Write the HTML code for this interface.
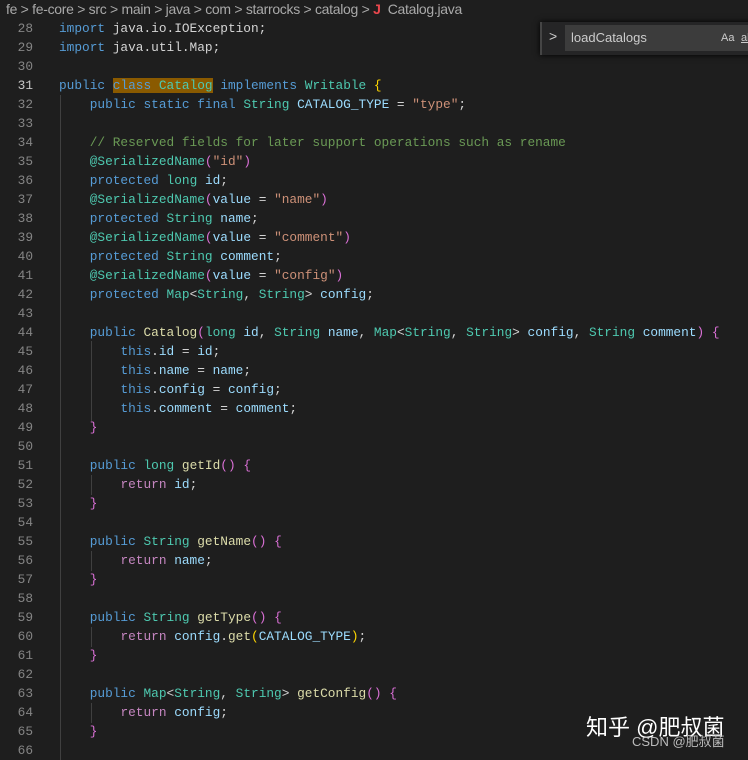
<!DOCTYPE html>
<html><head><meta charset="utf-8"><style>
body{margin:0;width:748px;height:758px;background:#1e1e1e;overflow:hidden;position:relative;font-family:"Liberation Mono",monospace}
.bc{position:absolute;left:6px;top:1px;font:14px "Liberation Sans",sans-serif;color:#a9a9a9;white-space:pre;letter-spacing:-0.3px}
.code{position:absolute;top:19px;left:0;font-size:12.8px;line-height:19px;color:#d4d4d4}
.l{height:19px;position:relative;white-space:pre}
.n{display:inline-block;width:33px;text-align:right;color:#858585;margin-right:26px}
.k{color:#569cd6}.t{color:#4ec9b0}.f{color:#dcdcaa}.s{color:#ce9178}.c{color:#6a9955}.v{color:#9cdcfe}.r{color:#c586c0}.b{color:#da70d6}.y{color:#ffd700}
.g{position:absolute;width:1px;background:#404040}
.find{position:absolute;left:540px;top:22px;width:220px;height:33px;background:#252526;box-shadow:0 0 6px #000;border-left:2px solid #454545}
.inp{position:absolute;left:23px;top:3px;width:200px;height:24px;background:#3c3c3c;border:1px solid #3c3c3c;font:13px "Liberation Sans",sans-serif;color:#ccc;line-height:24px;padding-left:5px}
.wm{position:absolute;color:#fff;font-family:"Liberation Sans","Noto Sans CJK SC",sans-serif;white-space:nowrap}
</style></head><body>
<div class="bc">fe &gt; fe-core &gt; src &gt; main &gt; java &gt; com &gt; starrocks &gt; catalog &gt; <span style="color:#e8474d;font-weight:bold">J</span>  Catalog.java</div>
<div class="g" style="left:60px;top:95px;height:665px"></div>
<div class="g" style="left:91px;top:341px;height:80px"></div>
<div class="g" style="left:91px;top:475px;height:20px"></div>
<div class="g" style="left:91px;top:551px;height:20px"></div>
<div class="g" style="left:91px;top:627px;height:20px"></div>
<div class="g" style="left:91px;top:703px;height:20px"></div>
<div class="code"><div class="l"><span class="n">28</span><span class="k">import</span> java.io.IOException;</div><div class="l"><span class="n">29</span><span class="k">import</span> java.util.Map;</div><div class="l"><span class="n">30</span></div><div class="l"><span class="n" style="color:#c6c6c6">31</span><span class="k">public</span> <span style="background:#8a5a00"><span class="k">class</span> <span class="t">Catalog</span></span> <span class="k">implements</span> <span class="t">Writable</span> <span class="y">{</span></div><div class="l"><span class="n">32</span>    <span class="k">public static final</span> <span class="t">String</span> <span class="v">CATALOG_TYPE</span> = <span class="s">"type"</span>;</div><div class="l"><span class="n">33</span></div><div class="l"><span class="n">34</span>    <span class="c">// Reserved fields for later support operations such as rename</span></div><div class="l"><span class="n">35</span>    <span class="t">@SerializedName</span><span class="b">(</span><span class="s">"id"</span><span class="b">)</span></div><div class="l"><span class="n">36</span>    <span class="k">protected</span> <span class="t">long</span> <span class="v">id</span>;</div><div class="l"><span class="n">37</span>    <span class="t">@SerializedName</span><span class="b">(</span><span class="v">value</span> = <span class="s">"name"</span><span class="b">)</span></div><div class="l"><span class="n">38</span>    <span class="k">protected</span> <span class="t">String</span> <span class="v">name</span>;</div><div class="l"><span class="n">39</span>    <span class="t">@SerializedName</span><span class="b">(</span><span class="v">value</span> = <span class="s">"comment"</span><span class="b">)</span></div><div class="l"><span class="n">40</span>    <span class="k">protected</span> <span class="t">String</span> <span class="v">comment</span>;</div><div class="l"><span class="n">41</span>    <span class="t">@SerializedName</span><span class="b">(</span><span class="v">value</span> = <span class="s">"config"</span><span class="b">)</span></div><div class="l"><span class="n">42</span>    <span class="k">protected</span> <span class="t">Map</span>&lt;<span class="t">String</span>, <span class="t">String</span>&gt; <span class="v">config</span>;</div><div class="l"><span class="n">43</span></div><div class="l"><span class="n">44</span>    <span class="k">public</span> <span class="f">Catalog</span><span class="b">(</span><span class="t">long</span> <span class="v">id</span>, <span class="t">String</span> <span class="v">name</span>, <span class="t">Map</span>&lt;<span class="t">String</span>, <span class="t">String</span>&gt; <span class="v">config</span>, <span class="t">String</span> <span class="v">comment</span><span class="b">)</span> <span class="b">{</span></div><div class="l"><span class="n">45</span>        <span class="k">this</span>.<span class="v">id</span> = <span class="v">id</span>;</div><div class="l"><span class="n">46</span>        <span class="k">this</span>.<span class="v">name</span> = <span class="v">name</span>;</div><div class="l"><span class="n">47</span>        <span class="k">this</span>.<span class="v">config</span> = <span class="v">config</span>;</div><div class="l"><span class="n">48</span>        <span class="k">this</span>.<span class="v">comment</span> = <span class="v">comment</span>;</div><div class="l"><span class="n">49</span>    <span class="b">}</span></div><div class="l"><span class="n">50</span></div><div class="l"><span class="n">51</span>    <span class="k">public</span> <span class="t">long</span> <span class="f">getId</span><span class="b">()</span> <span class="b">{</span></div><div class="l"><span class="n">52</span>        <span class="r">return</span> <span class="v">id</span>;</div><div class="l"><span class="n">53</span>    <span class="b">}</span></div><div class="l"><span class="n">54</span></div><div class="l"><span class="n">55</span>    <span class="k">public</span> <span class="t">String</span> <span class="f">getName</span><span class="b">()</span> <span class="b">{</span></div><div class="l"><span class="n">56</span>        <span class="r">return</span> <span class="v">name</span>;</div><div class="l"><span class="n">57</span>    <span class="b">}</span></div><div class="l"><span class="n">58</span></div><div class="l"><span class="n">59</span>    <span class="k">public</span> <span class="t">String</span> <span class="f">getType</span><span class="b">()</span> <span class="b">{</span></div><div class="l"><span class="n">60</span>        <span class="r">return</span> <span class="v">config</span>.<span class="f">get</span><span class="y">(</span><span class="v">CATALOG_TYPE</span><span class="y">)</span>;</div><div class="l"><span class="n">61</span>    <span class="b">}</span></div><div class="l"><span class="n">62</span></div><div class="l"><span class="n">63</span>    <span class="k">public</span> <span class="t">Map</span>&lt;<span class="t">String</span>, <span class="t">String</span>&gt; <span class="f">getConfig</span><span class="b">()</span> <span class="b">{</span></div><div class="l"><span class="n">64</span>        <span class="r">return</span> <span class="v">config</span>;</div><div class="l"><span class="n">65</span>    <span class="b">}</span></div><div class="l"><span class="n">66</span></div></div>
<div class="find"><span style="position:absolute;left:7px;top:6px;color:#ccc;font:14px 'Liberation Sans',sans-serif">&gt;</span><div class="inp">loadCatalogs<span style="position:absolute;left:155px;font-size:11px">Aa</span><span style="position:absolute;left:175px;font-size:11px;text-decoration:underline">ab</span></div></div>
<div class="wm" style="left:586px;top:710px;font-size:22px">知乎 @肥叔菌</div>
<div class="wm" style="left:632px;top:731px;font-size:13px;color:#bbb">CSDN @肥叔菌</div>
</body></html>
